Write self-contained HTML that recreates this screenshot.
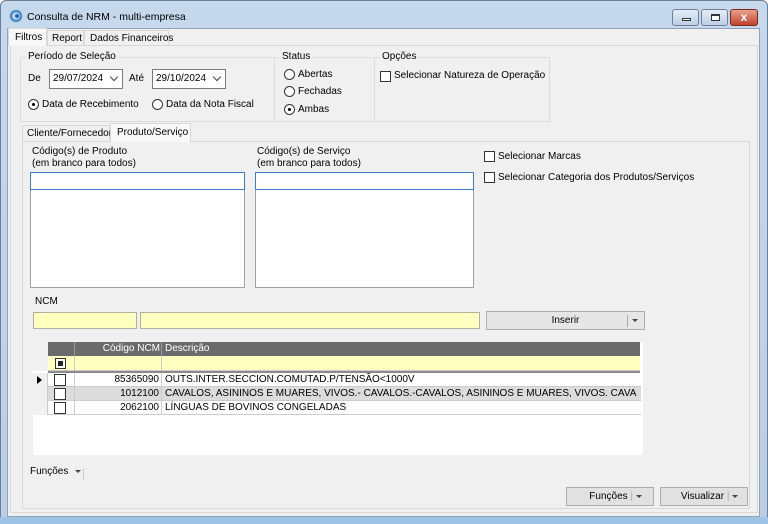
<!DOCTYPE html>
<html><head><meta charset="utf-8"><style>
*{box-sizing:border-box;margin:0;padding:0}
body{width:768px;height:524px;overflow:hidden;background:#fff;font-family:"Liberation Sans",sans-serif;font-size:10px;color:#000;position:relative}
.a{position:absolute;white-space:nowrap}
.grp{position:absolute;border:1px solid #dcdcdc}
.gl{position:absolute;background:#f0f0f0;padding:0 2px;top:-7px;left:5px;line-height:12px}
.cb{position:absolute;width:11px;height:11px;border:1px solid #333;background:#fff}
.rb{position:absolute;width:11px;height:11px;border:1px solid #333;border-radius:50%;background:#fff}
.rb.on:after{content:"";position:absolute;left:3px;top:3px;width:3px;height:3px;border-radius:50%;background:#000}
.dt{position:absolute;height:20px;border:1px solid #7a7a7a;background:#fff;padding:3px 3px;line-height:12px}
.chev{position:absolute;right:5px;top:4px;width:6px;height:6px;border-right:1px solid #444;border-bottom:1px solid #444;transform:rotate(45deg)}
.btn{position:absolute;border:1px solid #adadad;background:#e1e1e1;text-align:center;line-height:17px}
.arr{display:inline-block;width:0;height:0;border-left:3px solid transparent;border-right:3px solid transparent;border-top:3px solid #444;vertical-align:middle}
.row{position:absolute;left:33px;width:608px;height:14px;line-height:13px}
</style></head><body>
<div class="a" style="left:0;top:0;width:768px;height:524px;background:linear-gradient(#c6d8ec,#b9cfe6);border:1px solid #6b7f96;border-radius:6px 6px 0 0"></div>
<div class="a" style="left:0;top:517px;width:768px;height:7px;background:#9fc3e6"></div>
<div class="a" style="left:7px;top:28px;width:753px;height:489px;background:#f0f0f0;border:1px solid #8fa3b8"></div>
<svg class="a" style="left:9px;top:9px" width="14" height="14"><circle cx="7" cy="7" r="5" fill="none" stroke="#4a8fd0" stroke-width="2.5"/><circle cx="8" cy="7" r="2" fill="#2a6aa8"/></svg>
<div class="a" style="left:27px;top:11px;font-size:10.5px">Consulta de NRM - multi-empresa</div>
<div class="a" style="left:672px;top:9px;width:27px;height:17px;border:1px solid #6c7f96;border-radius:3px;background:linear-gradient(#e4edf7,#bccfe5)"><div class="a" style="left:9px;top:8px;width:9px;height:3px;border:1px solid #333;background:#fff"></div></div>
<div class="a" style="left:701px;top:9px;width:27px;height:17px;border:1px solid #6c7f96;border-radius:3px;background:linear-gradient(#e4edf7,#bccfe5)"><div class="a" style="left:9px;top:4px;width:9px;height:7px;border:1px solid #333;border-top-width:2px;background:#fff"></div></div>
<div class="a" style="left:730px;top:9px;width:28px;height:17px;border:1px solid #7a2a20;border-radius:3px;background:linear-gradient(#e9a08f,#c2432c);color:#fff;font-weight:bold;text-align:center;line-height:15px;font-size:12px">x</div>
<div class="a" style="left:10px;top:45px;width:748px;height:468px;border:1px solid #d9d9d9;background:#f0f0f0"></div>
<div class="a" style="left:8px;top:28px;width:39px;height:18px;background:#f8f8f8;border:1px solid #d9d9d9;border-bottom:none;padding:3px 0 0 6px">Filtros</div>
<div class="a" style="left:47px;top:30px;width:37px;height:15px;background:#f0f0f0;border:1px solid #d9d9d9;border-bottom:none;padding:2px 0 0 4px">Report</div>
<div class="a" style="left:84px;top:30px;width:85px;height:15px;background:#f0f0f0;border:1px solid #d9d9d9;border-bottom:none;padding:2px 0 0 5px">Dados Financeiros</div>
<div class="grp" style="left:20px;top:57px;width:255px;height:65px"><div class="gl">Período de Seleção</div></div>
<div class="a" style="left:28px;top:73px">De</div>
<div class="dt" style="left:49px;top:69px;width:74px">29/07/2024<div class="chev"></div></div>
<div class="a" style="left:129px;top:73px">Até</div>
<div class="dt" style="left:152px;top:69px;width:74px">29/10/2024<div class="chev"></div></div>
<div class="rb on" style="left:28px;top:99px"></div><div class="a" style="left:42px;top:99px">Data de Recebimento</div>
<div class="rb" style="left:152px;top:99px"></div><div class="a" style="left:166px;top:99px">Data da Nota Fiscal</div>
<div class="grp" style="left:274px;top:57px;width:101px;height:65px"><div class="gl" style="left:5px">Status</div></div>
<div class="rb" style="left:284px;top:69px"></div><div class="a" style="left:298px;top:69px">Abertas</div>
<div class="rb" style="left:284px;top:86px"></div><div class="a" style="left:298px;top:86px">Fechadas</div>
<div class="rb on" style="left:284px;top:104px"></div><div class="a" style="left:298px;top:104px">Ambas</div>
<div class="grp" style="left:374px;top:57px;width:176px;height:65px"><div class="gl" style="left:5px">Opções</div></div>
<div class="cb" style="left:380px;top:71px"></div><div class="a" style="left:394px;top:70px">Selecionar Natureza de Operação</div>
<div class="a" style="left:22px;top:141px;width:728px;height:368px;border:1px solid #d9d9d9;background:#f0f0f0"></div>
<div class="a" style="left:22px;top:125px;width:88px;height:16px;border:1px solid #d9d9d9;border-bottom:none;padding:2px 0 0 4px">Cliente/Fornecedor</div>
<div class="a" style="left:110px;top:123px;width:81px;height:19px;border:1px solid #d9d9d9;border-bottom:none;background:#f8f8f8;padding:3px 0 0 6px">Produto/Serviço</div>
<div class="a" style="left:32px;top:146px;line-height:12px">Código(s) de Produto<br>(em branco para todos)</div>
<div class="a" style="left:257px;top:146px;line-height:12px">Código(s) de Serviço<br>(em branco para todos)</div>
<div class="a" style="left:30px;top:172px;width:215px;height:116px;border:1px solid #a0a0a0;background:#fff"><div class="a" style="left:-1px;top:-1px;width:215px;height:18px;border:1px solid #3c7fd0"></div></div>
<div class="a" style="left:255px;top:172px;width:219px;height:116px;border:1px solid #a0a0a0;background:#fff"><div class="a" style="left:-1px;top:-1px;width:219px;height:18px;border:1px solid #3c7fd0"></div></div>
<div class="cb" style="left:484px;top:151px"></div><div class="a" style="left:498px;top:151px">Selecionar Marcas</div>
<div class="cb" style="left:484px;top:172px"></div><div class="a" style="left:498px;top:172px">Selecionar Categoria dos Produtos/Serviços</div>
<div class="a" style="left:35px;top:296px">NCM</div>
<div class="a" style="left:33px;top:312px;width:104px;height:17px;border:1px solid #b0b0a0;background:#ffffc0"></div>
<div class="a" style="left:140px;top:312px;width:340px;height:17px;border:1px solid #b0b0a0;background:#ffffc0"></div>
<div class="btn" style="left:486px;top:311px;width:159px;height:19px;background:#e6e6e6">Inserir<span class="a" style="left:140px;top:3px;height:12px;border-left:1px solid #aaa"></span><span class="a" style="left:145px;top:0"><span class="arr"></span></span></div>
<div class="a" style="left:33px;top:342px;width:610px;height:113px;background:#fff"></div>
<div class="a" style="left:48px;top:342px;width:592px;height:14px;background:#6b6b6b;color:#fff;line-height:14px">
<div class="a" style="left:26px;top:0;width:1px;height:14px;background:#999"></div>
<div class="a" style="left:113px;top:0;width:1px;height:14px;background:#999"></div>
<div class="a" style="left:26px;top:0;width:86px;text-align:right">Código NCM</div>
<div class="a" style="left:117px;top:0">Descrição</div></div>
<div class="a" style="left:33px;top:342px;width:15px;height:29px;background:#f0f0f0"></div>
<div class="a" style="left:48px;top:356px;width:592px;height:15px;background:#ffffc0;border-bottom:1px solid #ccc"></div>
<div class="a" style="left:74px;top:356px;width:1px;height:15px;background:#ccc"></div>
<div class="a" style="left:161px;top:356px;width:1px;height:15px;background:#ccc"></div>
<div class="cb" style="left:55px;top:358px"><div class="a" style="left:2px;top:2px;width:5px;height:5px;background:#222"></div></div>
<div class="a" style="left:48px;top:371px;width:592px;height:2px;background:#8a8a8a"></div>
<div class="a" style="left:33px;top:373px;width:608px;height:42px;border-right:1px solid #bbb;border-bottom:1px solid #bbb"></div>
<div class="row" style="top:373px;background:#fff;border-bottom:1px solid #ccc"></div>
<div class="row" style="top:387px;background:#dcdcdc;border-bottom:1px solid #ccc"></div>
<div class="row" style="top:401px;background:#fff;border-bottom:1px solid #ccc"></div>
<div class="a" style="left:33px;top:373px;width:15px;height:42px;background:#f0f0f0;border-right:1px solid #ccc"></div>
<div class="a" style="left:37px;top:376px;width:0;height:0;border-top:4px solid transparent;border-bottom:4px solid transparent;border-left:5px solid #000"></div>
<div class="a" style="left:74px;top:373px;width:1px;height:42px;background:#ccc"></div>
<div class="a" style="left:161px;top:373px;width:1px;height:42px;background:#ccc"></div>
<div class="cb" style="left:54px;top:374px;width:12px;height:12px"></div>
<div class="cb" style="left:54px;top:388px;width:12px;height:12px"></div>
<div class="cb" style="left:54px;top:402px;width:12px;height:12px"></div>
<div class="a" style="left:75px;top:374px;width:84px;text-align:right">85365090</div>
<div class="a" style="left:75px;top:388px;width:84px;text-align:right">1012100</div>
<div class="a" style="left:75px;top:402px;width:84px;text-align:right">2062100</div>
<div class="a" style="left:165px;top:374px">OUTS.INTER.SECCION.COMUTAD.P/TENSÃO&lt;1000V</div>
<div class="a" style="left:165px;top:388px">CAVALOS, ASININOS E MUARES, VIVOS.- CAVALOS.-CAVALOS, ASININOS E MUARES, VIVOS. CAVA</div>
<div class="a" style="left:165px;top:402px">LÍNGUAS DE BOVINOS CONGELADAS</div>
<div class="a" style="left:30px;top:466px">Funções <span class="arr" style="margin-left:4px"></span></div>
<div class="a" style="left:83px;top:468px;width:1px;height:12px;background:#ccc"></div>
<div class="btn" style="left:566px;top:487px;width:88px;height:19px">&nbsp;&nbsp;&nbsp;&nbsp;Funções <span style="color:#aaa">|</span> <span class="arr"></span></div>
<div class="btn" style="left:660px;top:487px;width:88px;height:19px">&nbsp;&nbsp;&nbsp;&nbsp;Visualizar <span style="color:#aaa">|</span> <span class="arr"></span></div>
</body></html>
